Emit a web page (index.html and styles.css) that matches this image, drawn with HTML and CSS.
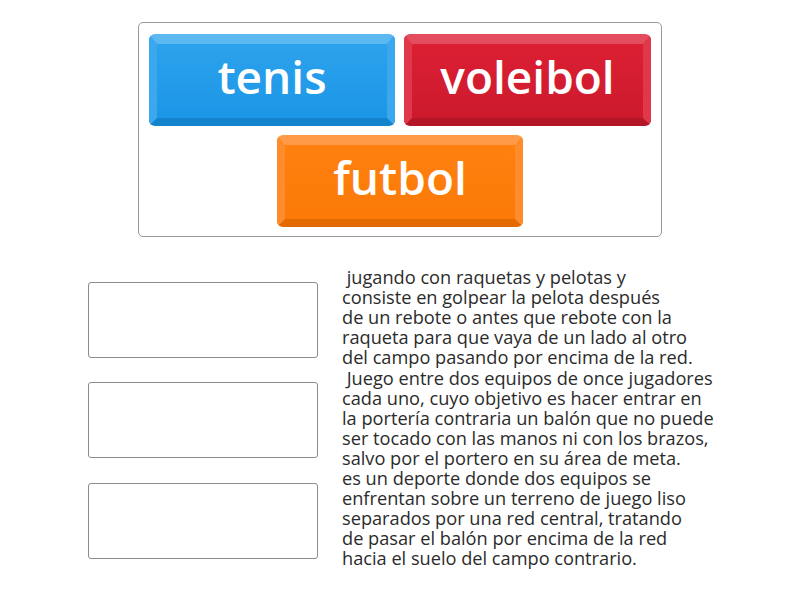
FILE: index.html
```html
<!DOCTYPE html>
<html lang="es">
<head>
<meta charset="utf-8">
<title>Emparejar</title>
<link rel="stylesheet" href="styles.css">
</head>
<body>
<div class="page">
  <div class="bank">
    <div class="tile tile-blue">tenis</div>
    <div class="tile tile-red">voleibol</div>
    <div class="tile tile-orange">futbol</div>
  </div>
  <div class="pairs">
    <div class="pair">
      <div class="drop"></div>
      <div class="desc">&nbsp;jugando con raquetas y pelotas y<br>consiste en golpear la pelota después<br>de un rebote o antes que rebote con la<br>raqueta para que vaya de un lado al otro<br>del campo pasando por encima de la red.</div>
    </div>
    <div class="pair">
      <div class="drop"></div>
      <div class="desc">&nbsp;Juego entre dos equipos de once jugadores<br>cada uno, cuyo objetivo es hacer entrar en<br>la portería contraria un balón que no puede<br>ser tocado con las manos ni con los brazos,<br>salvo por el portero en su área de meta.</div>
    </div>
    <div class="pair">
      <div class="drop"></div>
      <div class="desc">es un deporte donde dos equipos se<br>enfrentan sobre un terreno de juego liso<br>separados por una red central, tratando<br>de pasar el balón por encima de la red<br>hacia el suelo del campo contrario.</div>
    </div>
  </div>
</div>
</body>
</html>
```
FILE: styles.css
```css
html, body {
  margin: 0;
  padding: 0;
  background: #ffffff;
}
body {
  font-family: "Open Sans", "Liberation Sans", sans-serif;
  width: 800px;
  height: 600px;
  overflow: hidden;
}
.page {
  display: flex;
  flex-direction: column;
  align-items: center;
  padding-top: 22px;
}
.bank {
  box-sizing: border-box;
  width: 524px;
  height: 215px;
  border: 1px solid #9a9a9a;
  border-radius: 5px;
  padding: 11px 10px 10px 10px;
  display: flex;
  flex-wrap: wrap;
  justify-content: center;
  align-content: flex-start;
  gap: 9px 9px;
}
.tile {
  box-sizing: border-box;
  width: 246px;
  height: 92px;
  border-radius: 6px;
  border-style: solid;
  border-width: 10px 8px 8px 8px;
  color: #ffffff;
  font-size: 46px;
  font-weight: 600;
  display: flex;
  align-items: center;
  justify-content: center;
  line-height: 1;
  padding-bottom: 10px;
}
.tile-blue {
  background: linear-gradient(#2da2ec, #1b96e6);
  border-color: #5cb8f1 #3aa7ee #1583cc #3aa7ee;
}
.tile-red {
  width: 247px;
  background: linear-gradient(#dc1f33, #cc1a2d);
  border-color: #e44d5d #e0384a #b41627 #e0384a;
}
.tile-orange {
  background: linear-gradient(#ff800f, #fb7a08);
  border-color: #ff9b48 #ff8c2a #e26a00 #ff8c2a;
}
.pairs {
  margin-top: 30px;
  width: 624px;
  display: flex;
  flex-direction: column;
}
.pair {
  display: flex;
  align-items: center;
  gap: 24px;
  height: 100.5px;
}
.drop {
  box-sizing: border-box;
  flex: 0 0 230px;
  height: 76px;
  border: 1.5px solid #8c8c8c;
  border-radius: 3px;
  margin-top: 5px;
}
.desc {
  font-size: 18.2px;
  line-height: 20.1px;
  color: #2b2b2b;
  white-space: nowrap;
}
```
